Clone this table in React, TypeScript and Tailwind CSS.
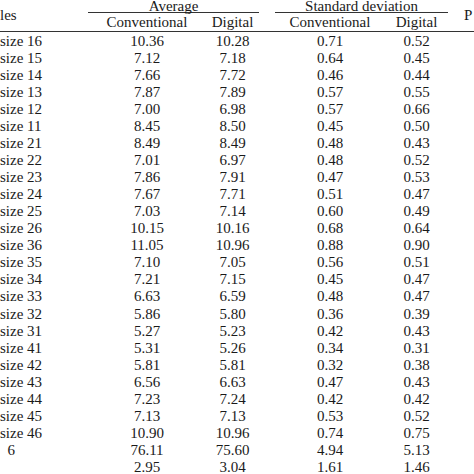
const rows: [string, string, string, string, string][] = [
  ["size 16", "10.36", "10.28", "0.71", "0.52"],
  ["size 15", "7.12", "7.18", "0.64", "0.45"],
  ["size 14", "7.66", "7.72", "0.46", "0.44"],
  ["size 13", "7.87", "7.89", "0.57", "0.55"],
  ["size 12", "7.00", "6.98", "0.57", "0.66"],
  ["size 11", "8.45", "8.50", "0.45", "0.50"],
  ["size 21", "8.49", "8.49", "0.48", "0.43"],
  ["size 22", "7.01", "6.97", "0.48", "0.52"],
  ["size 23", "7.86", "7.91", "0.47", "0.53"],
  ["size 24", "7.67", "7.71", "0.51", "0.47"],
  ["size 25", "7.03", "7.14", "0.60", "0.49"],
  ["size 26", "10.15", "10.16", "0.68", "0.64"],
  ["size 36", "11.05", "10.96", "0.88", "0.90"],
  ["size 35", "7.10", "7.05", "0.56", "0.51"],
  ["size 34", "7.21", "7.15", "0.45", "0.47"],
  ["size 33", "6.63", "6.59", "0.48", "0.47"],
  ["size 32", "5.86", "5.80", "0.36", "0.39"],
  ["size 31", "5.27", "5.23", "0.42", "0.43"],
  ["size 41", "5.31", "5.26", "0.34", "0.31"],
  ["size 42", "5.81", "5.81", "0.32", "0.38"],
  ["size 43", "6.56", "6.63", "0.47", "0.43"],
  ["size 44", "7.23", "7.24", "0.42", "0.42"],
  ["size 45", "7.13", "7.13", "0.53", "0.52"],
  ["size 46", "10.90", "10.96", "0.74", "0.75"],
  ["\u00a0\u00a06", "76.11", "75.60", "4.94", "5.13"],
  ["", "2.95", "3.04", "1.61", "1.46"],
];

const cols = "grid grid-cols-[88px_118px_53px_16px_110px_63px_1fr]";

export default function App() {
  return (
    <div
      className="w-[474px] h-[474px] overflow-hidden bg-white text-[#1a1a1a] text-[15px] leading-[17px]"
      style={{ fontFamily: '"Liberation Serif", "Times New Roman", serif' }}
    >
      {/* header */}
      <div className={`${cols} grid-rows-[13px_18px] border-b border-[#333]`}>
        <div className="row-span-2 flex items-center pb-[1px]">les</div>
        <div className="col-span-2 border-b-[1.5px] border-[#333] text-center leading-[12px]">
          Average
        </div>
        <div className="row-span-2" />
        <div className="col-span-2 border-b-[1.5px] border-[#333] text-center leading-[12px]">
          Standard deviation
        </div>
        <div className="row-span-2 flex items-center pl-[16px] pb-[1px]">P</div>
        <div className="text-center leading-[19px]">Conventional</div>
        <div className="text-center leading-[19px]">Digital</div>
        <div className="text-center leading-[19px]">Conventional</div>
        <div className="text-center leading-[19px]">Digital</div>
      </div>
      {/* body */}
      <div className="flex flex-col pt-[1px]">
        {rows.map(([label, ac, ad, sc, sd], i) => (
          <div key={i} className={`${cols} h-[17.04px] whitespace-pre`}>
            <div>{label}</div>
            <div className="text-center">{ac}</div>
            <div className="text-center">{ad}</div>
            <div />
            <div className="text-center">{sc}</div>
            <div className="text-center">{sd}</div>
            <div />
          </div>
        ))}
      </div>
    </div>
  );
}
